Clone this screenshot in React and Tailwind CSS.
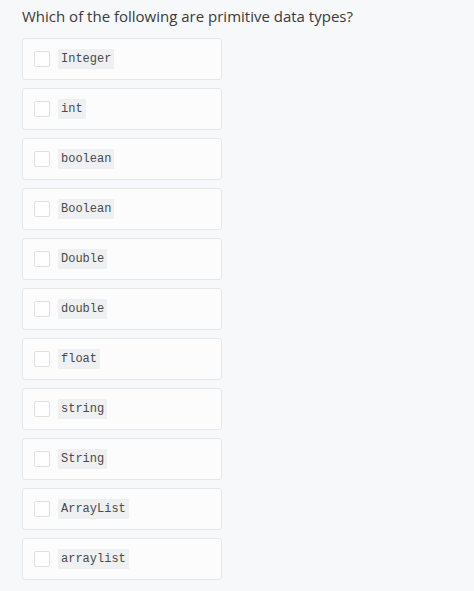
export default function App() {
  const items = ["Integer", "int", "boolean", "Boolean", "Double", "double", "float", "string", "String", "ArrayList", "arraylist"];
  return (
    <div className="w-[474px] h-[591px] bg-[#f7f8fa] px-[22px] pt-[6px]" style={{ fontFamily: "'Open Sans', sans-serif" }}>
      <div className="text-[15px] leading-[20px] text-[#3a3a3a] h-[32px]">Which of the following are primitive data types?</div>
      <div className="flex flex-col gap-[8px]">
        {items.map((t) => (
          <div key={t} className="w-[200px] h-[42px] bg-[#fcfcfd] border border-[#e6e7e9] rounded-[3px] flex items-center pl-[11px]">
            <div className="w-[16px] h-[16px] bg-white border border-[#dfe0e2] rounded-[2px]" />
            <span className="ml-[8px] h-[20px] px-[3px] bg-[#eff0f1] text-[12px] leading-[20px] text-[#4a4a4a]" style={{ fontFamily: "'Liberation Mono', 'Courier New', monospace" }}>{t}</span>
          </div>
        ))}
      </div>
    </div>
  );
}
